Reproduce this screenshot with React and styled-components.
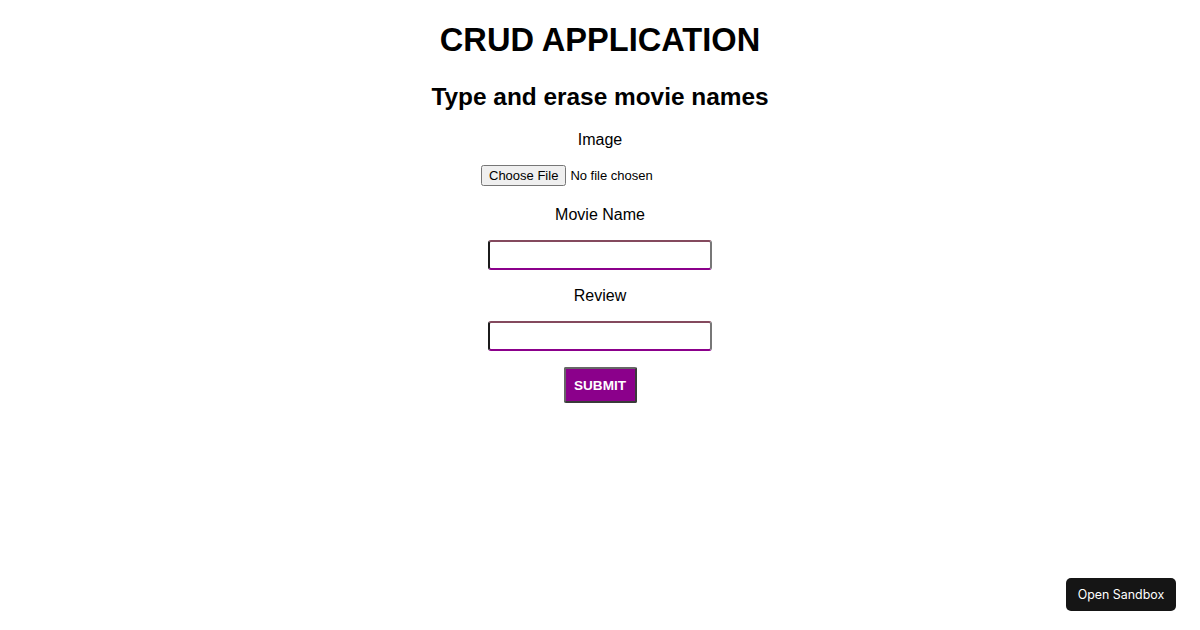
import React from "react";
import styled, { createGlobalStyle } from "styled-components";

const GlobalStyle = createGlobalStyle`
    body {
        margin: 8px;
        background: #ffffff;
        font-family: "Liberation Sans", Arial, sans-serif;
        color: #000000;
    }
`;

const Page = styled.div`
    text-align: center;
`;

const Title = styled.h1`
    font-size: 32.6px;
    font-weight: bold;
    margin: 13px 0 24px;
`;

const SubTitle = styled.h2`
    font-size: 24.4px;
    font-weight: bold;
    margin: 19.92px 0 19px;
`;

const Form = styled.div`
    display: flex;
    flex-direction: column;
    align-items: center;
`;

const Label = styled.label`
    display: block;
    font-size: 16px;
    line-height: 18px;
    margin: ${(p) => p.$top || 0}px 0 ${(p) => p.$bottom || 0}px;
`;

const FileInput = styled.input`
    font-family: "Liberation Sans", Arial, sans-serif;
    font-size: 13px;
    width: 238px;
    margin: 16px 0 20px;
`;

const TextInput = styled.input`
    box-sizing: border-box;
    width: 224px;
    height: 30px;
    border-radius: 3px;
    border-style: solid;
    border-width: 2px;
    border-top-color: #844a5e;
    border-left-color: #1b1b1b;
    border-right-color: #777777;
    border-bottom-color: #8b008b;
    padding: 1px 4px;
    font-family: "Liberation Sans", Arial, sans-serif;
    font-size: 13.33px;
    margin: 16px 0 16px;
    outline: none;
`;

const SubmitButton = styled.button`
    box-sizing: border-box;
    width: 73px;
    height: 36px;
    background: #8b008b;
    color: #ffffff;
    font-family: "Liberation Sans", Arial, sans-serif;
    font-size: 13.6px;
    font-weight: bold;
    border: 2px solid #3a3a3a;
    border-top-color: #666666;
    border-left-color: #666666;
    border-radius: 2px;
    padding: 0;
    cursor: pointer;
`;

const SandboxBadge = styled.a`
    position: fixed;
    right: 24px;
    bottom: 19px;
    width: 110px;
    height: 33px;
    display: flex;
    align-items: center;
    justify-content: center;
    background: #151515;
    color: #ffffff;
    border-radius: 5px;
    font-family: Inter, "Liberation Sans", sans-serif;
    font-size: 12.4px;
    text-decoration: none;
`;

const App = () => {
    return (
        <>
            <GlobalStyle />
            <Page>
                <Title>CRUD APPLICATION</Title>
                <SubTitle>Type and erase movie names</SubTitle>
                <Form>
                    <Label $top={1}>Image</Label>
                    <FileInput type="file" name="image" />
                    <Label>Movie Name</Label>
                    <TextInput type="text" name="movieName" />
                    <Label $top={1}>Review</Label>
                    <TextInput type="text" name="review" />
                    <SubmitButton>SUBMIT</SubmitButton>
                </Form>
            </Page>
            <SandboxBadge href="#">Open Sandbox</SandboxBadge>
        </>
    );
};

export default App;
